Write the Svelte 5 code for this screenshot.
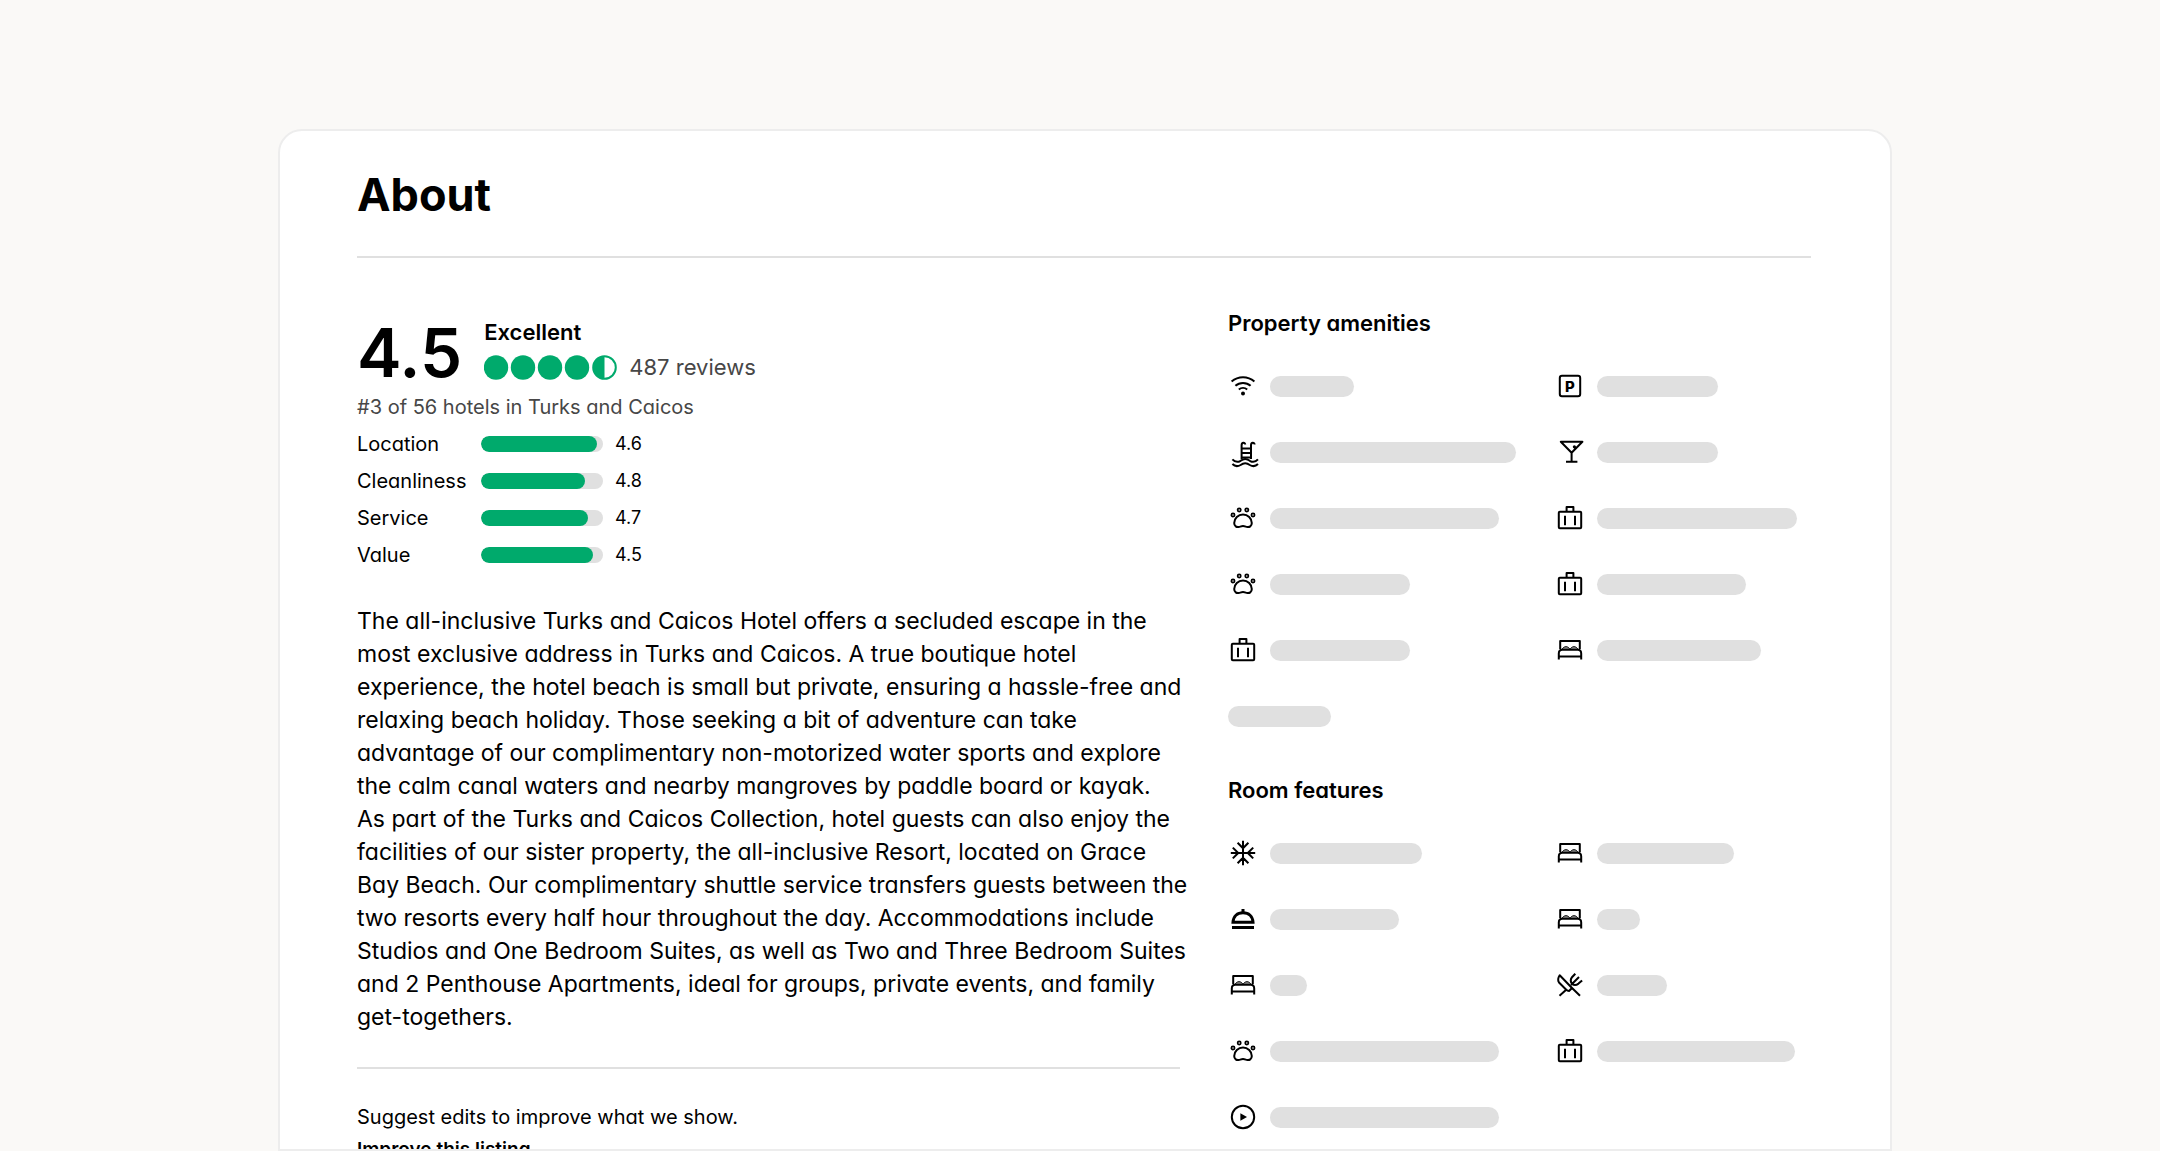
<script>
  const ratings = [
    { label: 'Location', fill: 95, value: '4.6' },
    { label: 'Cleanliness', fill: 85, value: '4.8' },
    { label: 'Service', fill: 88, value: '4.7' },
    { label: 'Value', fill: 92, value: '4.5' },
  ];

  const description = [
    'The all-inclusive Turks and Caicos Hotel offers a secluded escape in the',
    'most exclusive address in Turks and Caicos. A true boutique hotel',
    'experience, the hotel beach is small but private, ensuring a hassle-free and',
    'relaxing beach holiday. Those seeking a bit of adventure can take',
    'advantage of our complimentary non-motorized water sports and explore',
    'the calm canal waters and nearby mangroves by paddle board or kayak.',
    'As part of the Turks and Caicos Collection, hotel guests can also enjoy the',
    'facilities of our sister property, the all-inclusive Resort, located on Grace',
    'Bay Beach. Our complimentary shuttle service transfers guests between the',
    'two resorts every half hour throughout the day. Accommodations include',
    'Studios and One Bedroom Suites, as well as Two and Three Bedroom Suites',
    'and 2 Penthouse Apartments, ideal for groups, private events, and family',
    'get-togethers.',
  ];

  // Each entry is a grid cell: icon name and placeholder width.
  const sections = [
    {
      title: 'Property amenities',
      items: [
        ['wifi', 84], ['parking', 121],
        ['pool', 246], ['bar', 121],
        ['paw', 229], ['suitcase', 200],
        ['paw', 140], ['suitcase', 149],
        ['suitcase', 140], ['bed', 164],
        [null, 103],
      ],
    },
    {
      title: 'Room features',
      items: [
        ['snow', 152], ['bed', 137],
        ['bell', 129], ['bed', 43],
        ['bed', 37], ['utensils', 70],
        ['paw', 229], ['suitcase', 198],
        ['play', 229],
      ],
    },
  ];
</script>

{#snippet icon(name)}
  <svg class="icon" viewBox="0 0 30 30" aria-hidden="true">
    {#if name === 'wifi'}
      <path d="M3.6 10.6C10.2 4.8 19.8 4.8 26.4 10.6M7.4 14.8c4.2-3.9 11-3.9 15.2 0M10.8 18.4c2.4-2 6-2 8.4 0" />
      <circle class="solid" cx="15" cy="22.4" r="2" />
    {:else if name === 'parking'}
      <rect x="4.8" y="4.8" width="20.4" height="20.4" rx="2.2" />
      <text x="15" y="20.6">P</text>
    {:else if name === 'pool'}
      <path d="M13.6 22V8.2c0-3.2 3.6-3.2 3.6-.6M23 22V8.2c0-3.2 3.6-3.2 3.6-.6M13.6 11.4H23M13.6 16H23M13.6 20.4H23" />
      <path d="M4.4 22.4c2.6 2.8 5.8 2.8 8.200 1.400 3.200-2.400 6-2.400 9.200 0 2.400 1.400 5.600 1.400 8.200-1.400M4.400 27c2.600 2.600 5.800 2.400 8.200 1 3.200-2.400 6-2.400 9.200 0 2.400 1.400 5.600 1.600 8.200-1" />
    {:else if name === 'bar'}
      <path d="M5.8 4.8h21.6L16.6 15.8zM16.6 15.8v9M11 24.8h11.4" />
      <path d="M19.4 10.2l1.6 1.8" />
      <circle class="solid" cx="19.4" cy="9.8" r="1.6" />
    {:else if name === 'paw'}
      <path d="M15 11.4c-4.800 0-8.800 4-8.800 8.600 0 3.200 2.400 4.600 5 3.900 1.500-.4 2.500-.8 3.800-.8s2.300.4 3.800.8c2.600.7 5-.7 5-3.900 0-4.600-4-8.600-8.800-8.600z" />
      <g class="toes">
        <circle cx="11.2" cy="7" r="1.6" /><circle cx="18.8" cy="7" r="1.6" />
        <circle cx="5" cy="12" r="1.6" /><circle cx="25" cy="12" r="1.6" />
      </g>
    {:else if name === 'suitcase'}
      <path d="M11.6 8.8V4h6.8v4.8M10 12.8v9.4M20 12.8v9.4" />
      <rect x="3.8" y="8.8" width="22.4" height="16.4" rx="1" />
    {:else if name === 'bed'}
      <path class="pillow" d="M7 14.400c1.800-3.600 6.200-3.600 8 0 1.800-3.600 6.200-3.600 8 0z" />
      <path d="M5.200 14V6h19.600v8M3.800 24.600v-6c0-2.400 1.400-3.800 3.400-3.800h15.600c2 0 3.400 1.400 3.400 3.800v6M3.800 21.400h22.400" />
    {:else if name === 'snow'}
      <path d="M15 2.800v24.400M2.800 15h24.400M9.600 4.800l5.400 5.400 5.400-5.400M9.600 25.200l5.400-5.400 5.400 5.400M4.800 9.600l5.400 5.400-5.400 5.400M25.200 9.600L19.800 15l5.400 5.400" />
    {:else if name === 'bell'}
      <path class="dome" d="M5 18.2C5.4 12.2 9.2 8.8 15 8.800s9.600 3.400 10 9.400z" />
      <path class="dome" d="M4 23.400h22M15 5v3" />
    {:else if name === 'utensils'}
      <path d="M4.700 5.300L17 18l-3 3q-1.500 0-3-1.500l-7-7q-2-3 .7-7.200zM15.500 16.500L25 25.800M11.500 19.500l-7 6.300M20.300 3.700L17 7.200q-2.500 3.400 0 6.600 3 2.600 6.500-.2l3.600-3.200M24 7l-8 8" />
    {:else if name === 'play'}
      <circle cx="15" cy="15" r="11.200" />
      <path class="solid" d="M12.400 11.200v7.600l6.600-3.800z" />
    {/if}
  </svg>
{/snippet}

<main class="page">
  <article class="card">
    <header class="header"><h1>About</h1></header>
    <div class="columns">
      <section class="overview">
        <div class="score">
          <strong class="number">4.5</strong>
          <div class="verdict">
            <strong class="word">Excellent</strong>
            <div class="reviews">
              <svg class="bubbles" viewBox="0 0 133 25" role="img" aria-label="4.5 of 5 bubbles">
                {#each [12, 39, 66, 93] as cx}
                  <circle {cx} cy="12.5" r="12.2" />
                {/each}
                <circle class="ring" cx="120.5" cy="12.5" r="11.3" />
                <path d="M120.5 1.2a11.3 11.3 0 0 0 0 22.6z" />
              </svg>
              <span>487 reviews</span>
            </div>
          </div>
        </div>
        <p class="rank">#3 of 56 hotels in Turks and Caicos</p>
        <ul class="ratings">
          {#each ratings as r}
            <li>
              <span class="label">{r.label}</span>
              <span class="track"><span class="fill" style="width: {r.fill}%"></span></span>
              <span class="value">{r.value}</span>
            </li>
          {/each}
        </ul>
        <p class="description">
          {#each description as line}{line}<br />{/each}
        </p>
        <footer class="suggest">
          <p>Suggest edits to improve what we show.</p>
          <a href="#improve">Improve this listing</a>
        </footer>
      </section>

      <div class="features">
        {#each sections as section}
          <section>
            <h2>{section.title}</h2>
            <ul class="grid">
              {#each section.items as [name, width]}
                <li>
                  {#if name}{@render icon(name)}{/if}
                  <span class="placeholder" style="width: {width}px"></span>
                </li>
              {/each}
            </ul>
          </section>
        {/each}
      </div>
    </div>
  </article>
</main>

<style>
  :global(body) {
    background: #faf9f7;
  }
  .page {
    box-sizing: border-box;
    height: 100vh;
    padding: 129px 268px 0 278px;
    overflow: hidden;
    color: #000;
    font-family: Inter, 'Liberation Sans', sans-serif;
    font-feature-settings: 'cv11';
  }
  .card {
    box-sizing: border-box;
    height: 100%;
    padding: 36px 79px 0 77px;
    overflow: hidden;
    background: #fff;
    border: 2px solid #ededed;
    border-radius: 24px 24px 0 0;
  }
  h1, h2, p, ul {
    margin: 0;
    padding: 0;
    list-style: none;
  }
  .header {
    padding-bottom: 33px;
    border-bottom: 2px solid #e0e0e0;
  }
  h1 {
    font-size: 45px;
    font-weight: 700;
    line-height: 56px;
  }
  .columns {
    display: grid;
    grid-template-columns: 823fr 583fr;
    column-gap: 48px;
  }
  .overview {
    min-width: 0;
    padding-top: 60px;
  }
  .score {
    display: flex;
    align-items: flex-end;
    gap: 22px;
  }
  .number {
    min-width: 103px;
    font-size: 67px;
    font-weight: 600;
    line-height: 56px;
  }
  .verdict {
    display: grid;
    gap: 7px;
  }
  .word {
    font-size: 22px;
    font-weight: 600;
    line-height: 28px;
  }
  .reviews {
    display: flex;
    align-items: center;
    gap: 12px;
    color: #474747;
    font-size: 22px;
    line-height: 28px;
  }
  .bubbles {
    width: 133px;
    height: 25px;
    fill: #00aa6c;
  }
  .bubbles .ring {
    fill: none;
    stroke: #00aa6c;
    stroke-width: 2;
  }
  .rank {
    margin-top: 12px;
    color: #474747;
    font-size: 20px;
    line-height: 28px;
  }
  .ratings {
    margin-top: 4px;
  }
  .ratings li {
    display: grid;
    grid-template-columns: 124px 122px auto;
    align-items: center;
    height: 37px;
    font-size: 20px;
  }
  .track {
    height: 16px;
    overflow: hidden;
    background: #e0e0e0;
    border-radius: 8px;
  }
  .fill {
    display: block;
    height: 100%;
    background: #00aa6c;
    border-radius: 8px;
  }
  .value {
    padding-left: 12px;
    font-size: 18px;
  }
  .description {
    margin-top: 32px;
    font-size: 23px;
    line-height: 33px;
    white-space: nowrap;
  }
  .suggest {
    margin-top: 33px;
    padding-top: 32px;
    border-top: 2px solid #e0e0e0;
    font-size: 20px;
    line-height: 32px;
  }
  .suggest a {
    color: #000;
    font-size: 19px;
    font-weight: 600;
    text-decoration: none;
  }
  .features {
    display: grid;
    align-content: start;
    gap: 26px;
    padding-top: 50px;
  }
  h2 {
    margin-bottom: 15px;
    font-size: 22px;
    font-weight: 600;
    line-height: 30px;
  }
  .grid {
    display: grid;
    grid-template-columns: 327fr 256fr;
    grid-auto-rows: 66px;
  }
  .grid li {
    display: flex;
    align-items: center;
    gap: 12px;
  }
  .placeholder {
    height: 21px;
    background: #e0e0e0;
    border-radius: 11px;
  }
  .icon {
    flex: none;
    width: 30px;
    height: 30px;
    overflow: visible;
    fill: none;
    stroke: #000;
    stroke-width: 2;
    stroke-linejoin: round;
  }
  .icon .solid {
    fill: #000;
    stroke: none;
  }
  .icon .pillow {
    fill: #999;
    stroke-width: 1;
  }
  .icon .toes {
    stroke-width: 1.7;
  }
  .icon .dome {
    stroke-width: 3;
    stroke-linejoin: miter;
  }
  .icon text {
    fill: #000;
    stroke: none;
    font-size: 15px;
    font-weight: 800;
    text-anchor: middle;
  }
</style>
